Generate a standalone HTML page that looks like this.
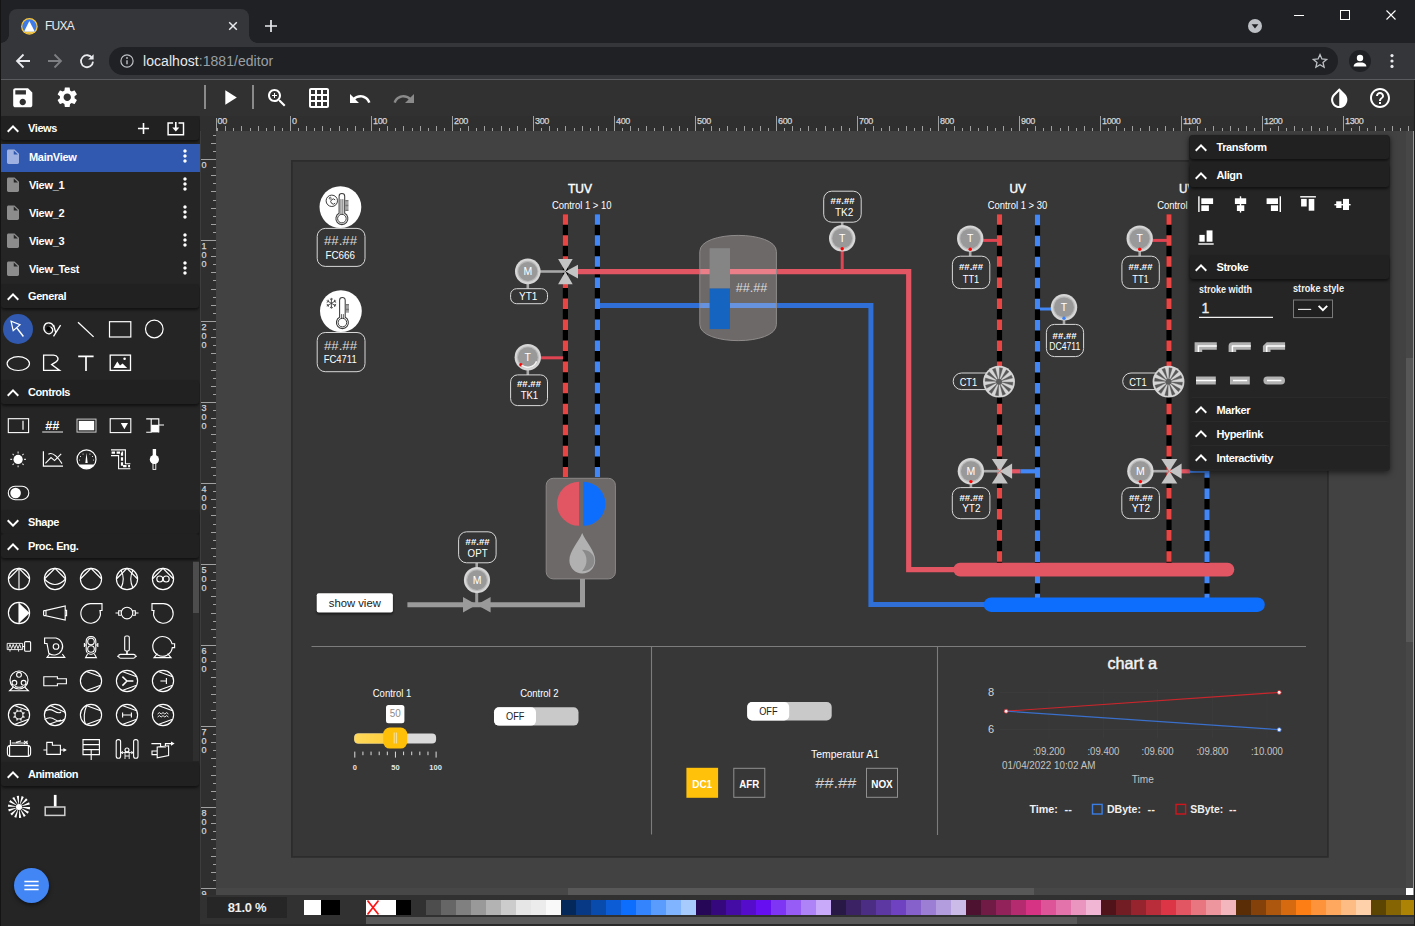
<!DOCTYPE html>
<html><head><meta charset="utf-8"><title>FUXA</title>
<style>
*{box-sizing:border-box;margin:0;padding:0}
html,body{width:1415px;height:926px;overflow:hidden;background:#424242;font-family:"Liberation Sans",sans-serif;color:#fff}
.abs{position:absolute}
svg{position:absolute;overflow:visible}
/* chrome */
#tabstrip{position:absolute;left:0;top:0;width:1415px;height:43px;background:#202124}
#tab{position:absolute;left:9px;top:9px;width:240px;height:34px;background:#35363a;border-radius:8px 8px 0 0}
#tab:before,#tab:after{content:"";position:absolute;bottom:0;width:8px;height:8px;background:radial-gradient(circle at 0 0,transparent 7.5px,#35363a 8px)}
#tab:before{left:-8px}
#tab:after{right:-8px;background:radial-gradient(circle at 100% 0,transparent 7.5px,#35363a 8px)}
#navbar{position:absolute;left:0;top:43px;width:1415px;height:36px;background:#35363a}
#omni{position:absolute;left:109px;top:4px;width:1228.5px;height:28px;border-radius:14px;background:#202124}
#navline{position:absolute;left:0;top:79px;width:1415px;height:1px;background:#5a5b5e}
/* app */
#apptb{position:absolute;left:0;top:80px;width:1415px;height:36px;background:#313131}
#side{position:absolute;left:0;top:116px;width:200px;height:810px;background:#252525}
.hdr{position:absolute;left:1px;width:198px;height:24px;background:#212121;border-radius:3px;box-shadow:0 2px 3px rgba(0,0,0,.55);font-size:11px;font-weight:bold;line-height:24px;padding-left:27px;color:#fff;letter-spacing:-.4px}
.row{position:absolute;left:1px;width:199px;height:28px;font-size:11px;font-weight:bold;line-height:26px;padding-left:28px;color:#fff;letter-spacing:-.3px}
</style></head><body>
<div id="tabstrip">
  <div id="tab"></div>
  <!-- favicon -->
  <svg style="left:20.7px;top:17.5px" width="16.8" height="16.8" viewBox="0 0 16.8 16.8"><defs><clipPath id="fv"><circle cx="8.4" cy="8.4" r="7.1"/></clipPath></defs><circle cx="8.4" cy="8.4" r="8.3" fill="#fdc836"/><g clip-path="url(#fv)"><rect x="0" y="0" width="16.8" height="16.8" fill="#3c7be8"/><path d="M8.4 3 L13.8 13.8 H3 Z" fill="#fff"/><rect x="0" y="13.8" width="16.8" height="4" fill="#fdc836"/></g></svg>
  <div class="abs" style="left:45px;top:19px;font-size:12px;color:#e8eaed;line-height:14px;letter-spacing:-.75px">FUXA</div>
  <svg style="left:228px;top:21px" width="10" height="10" viewBox="0 0 10 10"><path d="M1.2 1.2 L8.8 8.8 M8.8 1.2 L1.2 8.8" stroke="#e8eaed" stroke-width="1.5" fill="none"/></svg>
  <svg style="left:264px;top:19px" width="14" height="14" viewBox="0 0 14 14"><path d="M7 1 V13 M1 7 H13" stroke="#e8eaed" stroke-width="1.7" fill="none"/></svg>
  <!-- dropdown -->
  <svg style="left:1248px;top:19px" width="14" height="14" viewBox="0 0 14 14"><circle cx="7" cy="7" r="7" fill="#bdc1c6"/><path d="M3.6 5.2 H10.4 L7 9.6Z" fill="#202124"/></svg>
  <!-- window controls -->
  <svg style="left:1290px;top:8px" width="110" height="16" viewBox="0 0 110 16"><path d="M4 7.5 H14" stroke="#fff" stroke-width="1"/><rect x="50.5" y="2.5" width="9" height="9" fill="none" stroke="#fff" stroke-width="1"/><path d="M96.5 2.5 L105.5 11.5 M105.5 2.5 L96.5 11.5" stroke="#fff" stroke-width="1.1"/></svg>
</div>
<div id="navbar">
  <!-- back -->
  <svg style="left:15px;top:10px" width="16" height="16" viewBox="0 0 16 16"><path d="M15 8 H2.5 M8.5 1.5 L2 8 L8.5 14.5" stroke="#e8eaed" stroke-width="1.8" fill="none"/></svg>
  <svg style="left:47px;top:10px" width="16" height="16" viewBox="0 0 16 16"><path d="M1 8 H13.5 M7.5 1.5 L14 8 L7.5 14.5" stroke="#7d7f83" stroke-width="1.8" fill="none"/></svg>
  <!-- reload -->
  <svg style="left:79px;top:10px" width="16" height="16" viewBox="0 0 16 16"><path d="M13.2 5.2 A6 6 0 1 0 14 8.6" stroke="#e8eaed" stroke-width="1.8" fill="none"/><path d="M14.6 1.2 V6.6 H9.2 Z" fill="#e8eaed"/></svg>
  <div id="omni">
    <svg style="left:11px;top:7px" width="14" height="14" viewBox="0 0 14 14"><circle cx="7" cy="7" r="6.1" fill="none" stroke="#bdc1c6" stroke-width="1.2"/><path d="M7 6.2 V10.3" stroke="#bdc1c6" stroke-width="1.4"/><circle cx="7" cy="4" r=".9" fill="#bdc1c6"/></svg>
    <div class="abs" style="left:34px;top:5px;font-size:14px;line-height:18px;color:#e8eaed;white-space:nowrap;letter-spacing:.05px">localhost<span style="color:#9aa0a6">:1881/editor</span></div>
    <svg style="left:1203px;top:6px" width="16" height="16" viewBox="0 0 16 16"><path d="M8 1.6 L9.9 6 L14.6 6.4 L11 9.5 L12.1 14.2 L8 11.7 L3.9 14.2 L5 9.5 L1.4 6.4 L6.1 6 Z" fill="none" stroke="#bdc1c6" stroke-width="1.3" stroke-linejoin="miter"/></svg>
  </div>
  <svg style="left:1349px;top:7px" width="22" height="22" viewBox="0 0 22 22"><circle cx="11" cy="11" r="11" fill="#202124"/><circle cx="11" cy="8" r="3.2" fill="#fff"/><path d="M4.6 16.6 C4.6 12.8 8.4 12.4 11 12.4 C13.6 12.4 17.4 12.8 17.4 16.6 Z" fill="#fff"/></svg>
  <svg style="left:1390px;top:10px" width="4" height="16" viewBox="0 0 4 16"><circle cx="2" cy="2.6" r="1.6" fill="#e8eaed"/><circle cx="2" cy="8" r="1.6" fill="#e8eaed"/><circle cx="2" cy="13.4" r="1.6" fill="#e8eaed"/></svg>
</div>
<div id="navline"></div>
<div id="apptb"></div>
<svg style="left:9.75px;top:84.75px" width="25.5" height="25.5" viewBox="0 0 24 24"><path d="M17 3H5c-1.11 0-2 .9-2 2v14c0 1.1.89 2 2 2h14c1.1 0 2-.9 2-2V7l-4-4zm-5 16c-1.66 0-3-1.34-3-3s1.34-3 3-3 3 1.34 3 3-1.34 3-3 3zm3-10H5V5h10v4z" fill="#fff"/></svg>
<svg style="left:54.75px;top:85.25px" width="24.5" height="24.5" viewBox="0 0 24 24"><path d="M19.14 12.94c.04-.3.06-.61.06-.94 0-.32-.02-.64-.07-.94l2.03-1.58c.18-.14.23-.41.12-.61l-1.92-3.32c-.12-.22-.37-.29-.59-.22l-2.39.96c-.5-.38-1.03-.7-1.62-.94l-.36-2.54c-.04-.24-.24-.41-.48-.41h-3.84c-.24 0-.43.17-.47.41l-.36 2.54c-.59.24-1.13.57-1.62.94l-2.39-.96c-.22-.08-.47 0-.59.22L2.74 8.87c-.12.21-.08.47.12.61l2.03 1.58c-.05.3-.09.63-.09.94s.02.64.07.94l-2.03 1.58c-.18.14-.23.41-.12.61l1.92 3.32c.12.22.37.29.59.22l2.39-.96c.5.38 1.03.7 1.62.94l.36 2.54c.05.24.24.41.48.41h3.84c.24 0 .44-.17.47-.41l.36-2.54c.59-.24 1.13-.56 1.62-.94l2.39.96c.22.08.47 0 .59-.22l1.92-3.32c.12-.22.07-.47-.12-.61l-2.01-1.58zM12 15.6c-1.98 0-3.6-1.62-3.6-3.6s1.62-3.6 3.6-3.6 3.6 1.62 3.6 3.6-1.62 3.6-3.6 3.6z" fill="#fff"/></svg>
<div class="abs" style="left:204px;top:85px;width:2px;height:23.5px;background:#8a8a8a"></div>
<svg style="left:217.00px;top:85.00px" width="25" height="25" viewBox="0 0 24 24"><path d="M8 5v14l11-7z" fill="#fff"/></svg>
<div class="abs" style="left:252px;top:85px;width:2px;height:23.5px;background:#8a8a8a"></div>
<svg style="left:265.30px;top:86.00px" width="24" height="24" viewBox="0 0 24 24"><path d="M15.5 14h-.79l-.28-.27C15.41 12.59 16 11.11 16 9.5 16 5.91 13.09 3 9.5 3S3 5.91 3 9.5 5.91 16 9.5 16c1.61 0 3.09-.59 4.23-1.57l.27.28v.79l5 4.99L20.49 19l-4.99-5zm-6 0C7.01 14 5 11.99 5 9.5S7.01 5 9.5 5 14 7.01 14 9.5 11.99 14 9.5 14zM12 10h-2v2H9v-2H7V9h2V7h1v2h2v1z" fill="#fff"/></svg>
<svg style="left:307.00px;top:86.00px" width="24" height="24" viewBox="0 0 24 24"><path d="M20 2H4c-1.1 0-2 .9-2 2v16c0 1.1.9 2 2 2h16c1.1 0 2-.9 2-2V4c0-1.1-.9-2-2-2zM8 20H4v-4h4v4zm0-6H4v-4h4v4zm0-6H4V4h4v4zm6 12h-4v-4h4v4zm0-6h-4v-4h4v4zm0-6h-4V4h4v4zm6 12h-4v-4h4v4zm0-6h-4v-4h4v4zm0-6h-4V4h4v4z" fill="#fff"/></svg>
<svg style="left:348.00px;top:86.50px" width="24" height="24" viewBox="0 0 24 24"><path d="M12.5 8c-2.65 0-5.05.99-6.9 2.6L2 7v9h9l-3.62-3.62c1.39-1.16 3.16-1.88 5.12-1.88 3.54 0 6.55 2.31 7.6 5.5l2.37-.78C21.08 11.03 17.15 8 12.5 8z" fill="#fff"/></svg>
<svg style="left:392.00px;top:86.50px" width="24" height="24" viewBox="0 0 24 24"><path d="M18.4 10.6C16.55 8.99 14.15 8 11.5 8c-4.65 0-8.58 3.03-9.96 7.22L3.9 16c1.05-3.19 4.05-5.5 7.6-5.5 1.95 0 3.73.72 5.12 1.88L13 16h9V7l-3.6 3.6z" fill="#8a8a8a"/></svg>
<svg style="left:1327.05px;top:85.75px" width="24.5" height="24.5" viewBox="0 0 24 24"><path d="M17.66 7.93L12 2.27 6.34 7.93c-3.12 3.12-3.12 8.19 0 11.31C7.9 20.8 9.95 21.58 12 21.58c2.05 0 4.1-.78 5.66-2.34 3.12-3.12 3.12-8.19 0-11.31zM12 19.59c-1.6 0-3.11-.62-4.24-1.76C6.62 16.69 6 15.19 6 13.59s.62-3.11 1.76-4.24L12 5.1v14.49z" fill="#fff"/></svg>
<svg style="left:1368.00px;top:86.00px" width="24" height="24" viewBox="0 0 24 24"><path d="M11 18h2v-2h-2v2zm1-16C6.48 2 2 6.48 2 12s4.480 10 10 10 10-4.48 10-10S17.52 2 12 2zm0 18c-4.41 0-8-3.59-8-8s3.59-8 8-8 8 3.59 8 8-3.59 8-8 8zm0-14c-2.21 0-4 1.79-4 4h2c0-1.1.9-2 2-2s2 .9 2 2c0 2-3 1.750-3 5h2c0-2.25 3-2.5 3-5 0-2.21-1.79-4-4-4z" fill="#fff"/></svg>
<div id="side"></div>
<div class="hdr" style="top:116px">Views</div><svg style="left:1.00px;top:116.60px" width="24" height="24" viewBox="0 0 24 24"><path d="M12 8l-6 6 1.41 1.41L12 10.83l4.59 4.58L18 14z" fill="#fff"/></svg>
<svg style="left:133.50px;top:118.50px" width="19" height="19" viewBox="0 0 24 24"><path d="M19 13h-6v6h-2v-6H5v-2h6V5h2v6h6v2z" fill="#fff"/></svg>
<svg style="left:167.2px;top:121.8px" width="17.6" height="13.6" viewBox="0 0 19 15"><path d="M6.5 1 H1 V14 H18 V1 H12.5" fill="none" stroke="#fff" stroke-width="1.6"/><path d="M9.5 0 V8" stroke="#fff" stroke-width="1.8"/><path d="M5.6 6.2 H13.4 L9.5 10.6Z" fill="#fff"/></svg>
<div class="row" style="top:144px;background:#3059af;">MainView</div>
<svg style="left:4.00px;top:147.60px" width="18" height="17.4" preserveAspectRatio="none" viewBox="0 0 24 24"><path d="M6 2c-1.1 0-1.99.9-1.99 2L4 20c0 1.1.89 2 1.99 2H18c1.1 0 2-.9 2-2V8l-6-6H6zm7 7V3.500L18.5 9H13z" fill="#9fb1e0"/></svg>
<svg style="left:175.00px;top:146.00px" width="20" height="20" viewBox="0 0 24 24"><path d="M12 8c1.1 0 2-.9 2-2s-.9-2-2-2-2 .9-2 2 .9 2 2 2zm0 2c-1.1 0-2 .9-2 2s.9 2 2 2 2-.9 2-2-.9-2-2-2zm0 6c-1.100 0-2 .9-2 2s.9 2 2 2 2-.9 2-2-.9-2-2-2z" fill="#fff"/></svg>
<div class="row" style="top:172px;">View_1</div>
<svg style="left:4.00px;top:175.60px" width="18" height="17.4" preserveAspectRatio="none" viewBox="0 0 24 24"><path d="M6 2c-1.1 0-1.99.9-1.99 2L4 20c0 1.1.89 2 1.99 2H18c1.1 0 2-.9 2-2V8l-6-6H6zm7 7V3.500L18.5 9H13z" fill="#8c8c8c"/></svg>
<svg style="left:175.00px;top:174.00px" width="20" height="20" viewBox="0 0 24 24"><path d="M12 8c1.1 0 2-.9 2-2s-.9-2-2-2-2 .9-2 2 .9 2 2 2zm0 2c-1.1 0-2 .9-2 2s.9 2 2 2 2-.9 2-2-.9-2-2-2zm0 6c-1.100 0-2 .9-2 2s.9 2 2 2 2-.9 2-2-.9-2-2-2z" fill="#fff"/></svg>
<div class="row" style="top:200px;">View_2</div>
<svg style="left:4.00px;top:203.60px" width="18" height="17.4" preserveAspectRatio="none" viewBox="0 0 24 24"><path d="M6 2c-1.1 0-1.99.9-1.99 2L4 20c0 1.1.89 2 1.99 2H18c1.1 0 2-.9 2-2V8l-6-6H6zm7 7V3.500L18.5 9H13z" fill="#8c8c8c"/></svg>
<svg style="left:175.00px;top:202.00px" width="20" height="20" viewBox="0 0 24 24"><path d="M12 8c1.1 0 2-.9 2-2s-.9-2-2-2-2 .9-2 2 .9 2 2 2zm0 2c-1.1 0-2 .9-2 2s.9 2 2 2 2-.9 2-2-.9-2-2-2zm0 6c-1.100 0-2 .9-2 2s.9 2 2 2 2-.9 2-2-.9-2-2-2z" fill="#fff"/></svg>
<div class="row" style="top:228px;">View_3</div>
<svg style="left:4.00px;top:231.60px" width="18" height="17.4" preserveAspectRatio="none" viewBox="0 0 24 24"><path d="M6 2c-1.1 0-1.99.9-1.99 2L4 20c0 1.1.89 2 1.99 2H18c1.1 0 2-.9 2-2V8l-6-6H6zm7 7V3.500L18.5 9H13z" fill="#8c8c8c"/></svg>
<svg style="left:175.00px;top:230.00px" width="20" height="20" viewBox="0 0 24 24"><path d="M12 8c1.1 0 2-.9 2-2s-.9-2-2-2-2 .9-2 2 .9 2 2 2zm0 2c-1.1 0-2 .9-2 2s.9 2 2 2 2-.9 2-2-.9-2-2-2zm0 6c-1.100 0-2 .9-2 2s.9 2 2 2 2-.9 2-2-.9-2-2-2z" fill="#fff"/></svg>
<div class="row" style="top:256px;">View_Test</div>
<svg style="left:4.00px;top:259.60px" width="18" height="17.4" preserveAspectRatio="none" viewBox="0 0 24 24"><path d="M6 2c-1.1 0-1.99.9-1.99 2L4 20c0 1.1.89 2 1.99 2H18c1.1 0 2-.9 2-2V8l-6-6H6zm7 7V3.500L18.5 9H13z" fill="#8c8c8c"/></svg>
<svg style="left:175.00px;top:258.00px" width="20" height="20" viewBox="0 0 24 24"><path d="M12 8c1.1 0 2-.9 2-2s-.9-2-2-2-2 .9-2 2 .9 2 2 2zm0 2c-1.1 0-2 .9-2 2s.9 2 2 2 2-.9 2-2-.9-2-2-2zm0 6c-1.100 0-2 .9-2 2s.9 2 2 2 2-.9 2-2-.9-2-2-2z" fill="#fff"/></svg>
<div class="hdr" style="top:284px">General</div><svg style="left:1.00px;top:284.60px" width="24" height="24" viewBox="0 0 24 24"><path d="M12 8l-6 6 1.41 1.41L12 10.83l4.59 4.58L18 14z" fill="#fff"/></svg>
<div class="hdr" style="top:380px">Controls</div><svg style="left:1.00px;top:380.60px" width="24" height="24" viewBox="0 0 24 24"><path d="M12 8l-6 6 1.41 1.41L12 10.83l4.59 4.58L18 14z" fill="#fff"/></svg>
<div class="hdr" style="top:510px">Shape</div><svg style="left:1.00px;top:510.60px" width="24" height="24" viewBox="0 0 24 24"><path d="M16.59 8.59L12 13.17 7.41 8.59 6 10l6 6 6-6z" fill="#fff"/></svg>
<div class="hdr" style="top:534px">Proc. Eng.</div><svg style="left:1.00px;top:534.60px" width="24" height="24" viewBox="0 0 24 24"><path d="M12 8l-6 6 1.41 1.41L12 10.83l4.59 4.58L18 14z" fill="#fff"/></svg>
<div class="hdr" style="top:762px">Animation</div><svg style="left:1.00px;top:762.60px" width="24" height="24" viewBox="0 0 24 24"><path d="M12 8l-6 6 1.41 1.41L12 10.83l4.59 4.58L18 14z" fill="#fff"/></svg>
<div class="abs" style="left:13.5px;top:867.5px;width:35px;height:35px;border-radius:50%;background:#4285f4;box-shadow:0 2px 4px rgba(0,0,0,.5)"></div>
<svg style="left:21.50px;top:875.50px" width="19" height="19" viewBox="0 0 24 24"><path d="M3 18h18v-2H3v2zm0-5h18v-2H3v2zm0-7v2h18V6H3z" fill="#fff"/></svg>
<svg style="left:0;top:0" width="200" height="926" viewBox="0 0 200 926" fill="none" stroke="#fff" stroke-width="1.3" stroke-linecap="butt" stroke-linejoin="miter">
<circle cx="18" cy="329" r="15" fill="#3059af" stroke="none"/>
<path d="M11.1 321.3 L13.2 330.6 L20 324.600 Z" fill="none" stroke="#fff" stroke-width="1.2" stroke-linejoin="miter"/><path d="M16.8 327.9 L23.4 336.500" stroke="#fff" stroke-width="1.5"/>
<path d="M53.5 327 C53 322.400 46 321.300 44.200 326 C42.700 330.600 46.500 334.700 50 333.600 C53 332.700 53.600 329 51.500 327.600 C49.800 326.400 47.600 327.600 47.800 329.400" stroke-width="1.3"/><circle cx="48.6" cy="328.700" r="2.300" fill="#000" stroke="none"/><path d="M53.6 325 L55.700 332.600 M60.600 325.200 L53.500 336.400" stroke-width="1.300"/>
<path d="M78 322.3 L93.6 336.9" stroke-width="1.3"/>
<rect x="109.5" y="321.7" width="21.3" height="15.3" stroke-width="1.2"/>
<circle cx="154.3" cy="329" r="8.8" stroke-width="1.2"/>
<ellipse cx="18.3" cy="363.6" rx="11.2" ry="6.9" stroke-width="1.2"/>
<path d="M43.6 355.2 H53.5 C57.6 355.2 59.6 359 56.4 361.6 L51.6 364.6 L59.6 370.4 H43.6 Z" stroke-width="1.3"/>
<path d="M78.2 356.3 H93.6 M86 356.3 V371" stroke-width="1.7"/>
<rect x="110.2" y="355.1" width="20.3" height="15.3" stroke-width="1.3"/><path d="M113.4 368 L117.3 361.6 L120 365.6 L122.6 363.4 L127.2 368 Z" fill="#fff" stroke="none"/><circle cx="124.6" cy="358.8" r="1.3" fill="#fff" stroke="none"/>
<rect x="8.3" y="418.7" width="20.3" height="13.9" stroke-width="1.1"/><path d="M23 420.8 V429.8" stroke-width="1.2"/>
<text x="45.2" y="429.6" font-family="Liberation Sans" font-size="12.5" font-weight="bold" fill="#fff" stroke="none" textLength="14.2" lengthAdjust="spacingAndGlyphs">##</text><path d="M42.2 432 H63" stroke-width="1.1" stroke="#ddd"/>
<rect x="77" y="419.1" width="19" height="13" stroke-width="1" stroke="#ccc"/><rect x="78.8" y="420.9" width="15.4" height="9.4" fill="#fff" stroke="none"/>
<rect x="110.2" y="418.7" width="20.6" height="13.9" stroke-width="1.1"/><path d="M120.8 423 H128 L124.4 429.2 Z" fill="#fff" stroke="none"/>
<path d="M146.2 418.9 H158.8 V432.4 M151.2 418.9 V432.4 M146.2 432.3 H151.6 M158.8 425 H164" stroke-width="1.1"/><rect x="151.2" y="424.8" width="7.6" height="7.6" fill="#fff" stroke="none"/>
<circle cx="18.1" cy="459.4" r="4.6" fill="#fff" stroke="none"/>
<path d="M24.10 459.40 L25.90 459.40 M22.34 463.64 L23.62 464.92 M18.10 465.40 L18.10 467.20 M13.86 463.64 L12.58 464.92 M12.10 459.40 L10.30 459.40 M13.86 455.16 L12.58 453.88 M18.10 453.40 L18.10 451.60 M22.34 455.16 L23.62 453.88 " stroke-width="1.1" stroke="#ddd"/>
<path d="M43.4 451.2 V466.2 H63" stroke-width="1.2"/><path d="M45.4 463.4 L51 457.6 L54.6 460.6 L61.2 453.8 M48.4 454.2 C52 452 57 456 62 463.6" stroke-width="1.1"/>
<circle cx="86.5" cy="459.4" r="9.5" stroke-width="1.2"/><path d="M78.6 464.6 H94.4 A9.5 9.5 0 0 1 78.6 464.600Z" fill="#fff" stroke="none"/><path d="M85.3 463 L86.5 452.8 L87.7 463Z" fill="#fff" stroke="none"/>
<circle cx="79.60" cy="460.00" r=".55" fill="#fff" stroke="none"/><circle cx="80.52" cy="456.55" r=".55" fill="#fff" stroke="none"/><circle cx="83.05" cy="454.02" r=".55" fill="#fff" stroke="none"/><circle cx="89.95" cy="454.02" r=".55" fill="#fff" stroke="none"/><circle cx="92.48" cy="456.55" r=".55" fill="#fff" stroke="none"/><circle cx="93.40" cy="460.00" r=".55" fill="#fff" stroke="none"/>
<path d="M111 449.9 H125.4 V463.8 H130.4 M111 455.6 H118.6 V468.8 H130.4" stroke-width="1.1"/><path d="M111.6 452.7 H122 V466.2 H130" stroke="#fff" stroke-width="2.2" stroke-dasharray="3.4 1.6"/>
<rect x="152.7" y="449" width="3.4" height="8" fill="#fff" stroke="none"/><circle cx="154.4" cy="459.5" r="4.6" fill="#fff" stroke="none"/><rect x="153" y="463" width="2.8" height="6.4" stroke-width=".9"/>
<rect x="8.3" y="486.2" width="20.5" height="13.5" rx="6.75" stroke-width="1.1"/><circle cx="15.6" cy="493" r="5.3" fill="#fff" stroke="none"/>
<circle cx="19" cy="579" r="10.6" stroke-width="1.15"/><path d="M8.4 579.0 L19.0 568.4 L29.6 579.0" stroke-width="1.15"/><path d="M19 568.4 V589.6" stroke-width="1.12"/>
<circle cx="55" cy="579" r="10.6" stroke-width="1.15"/><path d="M44.4 579.0 L55.0 568.4 L65.6 579.0" stroke-width="1.15"/><path d="M44.4 579 Q55 590 65.6 579" stroke-width="1.15"/>
<circle cx="91" cy="579" r="10.6" stroke-width="1.15"/><path d="M80.4 579.0 L91.0 568.4 L101.6 579.0" stroke-width="1.15"/>
<circle cx="127" cy="579" r="10.6" stroke-width="1.15"/><path d="M116.4 579.0 L127.0 568.4 L137.6 579.0" stroke-width="1.15"/><path d="M121 570 Q125.5 579 121 588 M133 570 Q128.5 579 133 588" stroke-width="1.12"/>
<circle cx="163" cy="579" r="10.6" stroke-width="1.15"/><path d="M152.4 579.0 L163.0 568.4 L173.6 579.0" stroke-width="1.15"/><circle cx="159.8" cy="579" r="3" stroke-width="1.12"/><circle cx="166.2" cy="579" r="3" stroke-width="1.12"/>
<circle cx="19" cy="613" r="10.6" stroke-width="1.15"/><path d="M19 602.2 V623.8" stroke-width="1.12"/><path d="M19 603 L29.6 613 L19 623Z" fill="#fff" stroke="none"/>
<path d="M46 610.4 L65.2 606 V620 L46 615.8 Z M43.6 610.6 H46 M43.6 615.6 H46 M43.6 610.6 V615.6 M65.2 610.4 H66.6 V615.6 H65.2" stroke-width="1.12"/>
<path d="M102 603.6 H91 A 9.8 9.8 0 1 0 100 610.5 H102 Z" stroke-width="1.15"/>
<circle cx="127" cy="613" r="5.8" stroke-width="1.15"/><path d="M121.2 610.7 H118.7 V615.3 H121.2 M132.8 610.7 H135.3 V615.3 H132.8 M118.7 613 H115.5 M135.3 613 H138.5" stroke-width="1.12"/>
<path d="M152 603.6 H163 A 9.8 9.8 0 1 1 154 610.5 H152 Z" stroke-width="1.15"/>
<path d="M7.2 643.4 H22.6 V649.6 H7.2 Z M8.4 648.6 L10 644.4 L11.6 648.6 L13.2 644.4 L14.8 648.6 L16.4 644.4 L18 648.6 L19.6 644.4 L21.2 648.6 M10 649.6 V651.6 M18.6 649.6 V651.6" stroke-width=".9"/><rect x="24.6" y="641.6" width="6" height="9.6" rx="1" stroke-width="1.12"/><path d="M22.6 646.5 H24.6" stroke-width="1.12"/>
<path d="M44.6 638 H56 A 8.6 8.6 0 1 1 48.8 653.2 L47 643.5 H44.600 Z" stroke-width="1.15"/><circle cx="56" cy="646.5" r="2.8" stroke-width="1.12"/><path d="M49.5 654 L47 657.4 H64.8 L62.3 654" stroke-width="1.12"/>
<rect x="86.2" y="636.6" width="9.6" height="17.6" rx="4.4" stroke-width="1.12"/><circle cx="91" cy="641.6" r="3.3" stroke-width="1.12"/><circle cx="91" cy="649" r="3.3" stroke-width="1.12"/><path d="M86.2 645 H84 M95.8 645 H98.3 M84.4 643 V647 M97.8 643 V647 M87.6 654 L85.6 657.6 H96.4 L94.4 654" stroke-width="1.12"/>
<rect x="124.7" y="636" width="4.6" height="15" rx="1.5" stroke-width="1.12"/><path d="M127 651 V654.4" stroke-width="1.6"/><rect x="118.6" y="654.4" width="16.8" height="3.8" rx="1.9" stroke-width="1.12"/><path d="M118.6 656.3 H117 M135.4 656.3 H137" stroke-width="1.12"/>
<path d="M172 643.7 A 9.8 9.8 0 1 0 172.3 647.6 H174.6 V643.7 Z" stroke-width="1.15"/><path d="M157.4 653.6 L154 657.6 H171 L167.6 653.6" stroke-width="1.12"/>
<circle cx="19" cy="680" r="9" stroke-width="1.12"/><circle cx="19" cy="674.8" r="2.4" stroke-width="1.12"/><circle cx="14.4" cy="682.8" r="2.4" stroke-width="1.12"/><circle cx="23.6" cy="682.8" r="2.4" stroke-width="1.12"/><path d="M13.4 687 L9.6 690.8 H28.4 L24.6 687 M15 686.4 Q19 688 23 686.4" stroke-width="1.12"/>
<path d="M43.8 676.8 H57.4 V678.8 H66.4 V683.8 H57.4 V685.8 H43.8 Z" stroke-width="1.12"/>
<circle cx="91" cy="681" r="10.6" stroke-width="1.15"/><path d="M86.20 671.55 L100.65 676.70 M86.20 690.45 L100.65 685.30" stroke-width="1.12"/>
<circle cx="127" cy="681" r="10.6" stroke-width="1.15"/><path d="M122.20 671.55 L136.65 676.70 M122.20 690.45 L136.65 685.30" stroke-width="1.12"/><path d="M127 681 L122.4 676.6 M127 681 L122.4 685.6 M127 681 H133.4" stroke-width="1.5"/>
<circle cx="163" cy="681" r="10.6" stroke-width="1.15"/><path d="M158.20 671.55 L172.65 676.70 M158.20 690.45 L172.65 685.30" stroke-width="1.12"/><path d="M160.4 681 H166.4 M166.4 678 V684" stroke-width="1.12"/>
<circle cx="19" cy="715" r="10.6" stroke-width="1.15"/><path d="M14.20 705.55 L28.65 710.70 M14.20 724.45 L28.65 719.30" stroke-width="1.12"/><circle cx="19" cy="715" r="4" stroke-width="1.1"/><path d="M22.88 716.61 L24.54 717.30 M20.61 718.88 L21.30 720.54 M17.39 718.88 L16.70 720.54 M15.12 716.61 L13.46 717.30 M15.12 713.39 L13.46 712.70 M17.39 711.12 L16.70 709.46 M20.61 711.12 L21.30 709.46 M22.88 713.39 L24.54 712.70 " stroke-width="1.3"/>
<circle cx="55" cy="715" r="10.6" stroke-width="1.15"/><path d="M50 705.4 L65.6 712.4 M44.6 711.4 Q49 708 54 711 T61 712 M44.6 719.6 Q50 716 55 719.6 T65 718.6 M49 724.2 L61 720" stroke-width="1.12"/>
<circle cx="91" cy="715" r="10.6" stroke-width="1.15"/><path d="M86.20 705.55 L100.65 710.70 M86.20 724.45 L100.65 719.30" stroke-width="1.12"/><path d="M87 704.8 Q82.4 715 85.4 724.4" stroke-width="1.12"/>
<circle cx="127" cy="715" r="10.6" stroke-width="1.15"/><path d="M122.20 705.55 L136.65 710.70 M122.20 724.45 L136.65 719.30" stroke-width="1.12"/><path d="M122.6 715 H131.4 M122.6 712.4 V717.6 M131.4 712.4 V717.6" stroke-width="1.12"/>
<circle cx="163" cy="715" r="10.6" stroke-width="1.15"/><path d="M158.20 705.55 L172.65 710.70 M158.20 724.45 L172.65 719.30" stroke-width="1.12"/><path d="M157.6 714 l1.8 -1.4 l1.8 1.4 l1.8 -1.4 l1.8 1.4 l1.8 -1.4 l1.8 1.400 M157.6 717 l1.8 -1.4 l1.8 1.4 l1.8 -1.4 l1.8 1.4 l1.8 -1.4 l1.8 1.400" stroke-width=".9"/>
<rect x="7.4" y="745.4" width="23.2" height="11" rx="3.4" stroke-width="1.1"/><path d="M10.4 745.4 V740 M11.6 743 H28 M16 742.2 L21 741 M24 740.8 L27.6 744 M27.6 740.8 L24 744 M9.6 745.4 V756.4 M28.4 745.4 V756.4" stroke-width="1.12"/>
<path d="M46.8 742.4 H52.4 V745.2 H60.4 V754.4 H46.8 Z M43.4 750 H46.8 M60.4 750 H64" stroke-width="1.12"/><path d="M63.4 748 L66.800 750 L63.400 752Z" fill="#fff" stroke="none"/>
<path d="M83 739.6 H99.4 V754.6 H83 Z M83 744.6 H99.4 M83 749.6 H99.4 M91.2 749.6 V760" stroke-width="1.12"/>
<rect x="116.2" y="739.6" width="4.4" height="18.6" rx="2" stroke-width="1.12"/><rect x="133.6" y="739.6" width="4.4" height="18.600" rx="2" stroke-width="1.12"/><circle cx="127" cy="750" r="2" stroke-width="1.12"/><path d="M120.6 752.6 H133.6 M125 759 V752 H129.2 V759 M123 751.4 L121 752.6 L123 753.8 M131.2 751.4 L133.200 752.6 L131.200 753.8 M125 756 H129.2" stroke-width=".9"/>
<path d="M151.4 743.6 H160.6 V747 H165.4 V743.6 H172 M157.2 747 L168.6 745.8 V755.6 L157.2 757.8 Z M157.2 751 H152 V754.6 H157.2" stroke-width="1.1"/><path d="M171 741.4 L174.600 743.6 L171 745.8Z" fill="#fff" stroke="none"/>
<path d="M20.49 807.08 L30.10 807.07 L29.82 809.38 Z M20.26 807.71 L28.93 811.87 L27.67 813.83 Z M19.79 808.18 L25.79 815.68 L23.81 816.90 Z M19.16 808.39 L21.31 817.76 L18.99 818.00 Z M18.49 808.31 L16.37 817.68 L14.18 816.90 Z M17.93 807.95 L11.95 815.47 L10.32 813.82 Z M17.58 807.38 L8.93 811.57 L8.18 809.36 Z M17.51 806.72 L7.90 806.73 L8.18 804.42 Z M17.74 806.09 L9.07 801.93 L10.33 799.97 Z M18.21 805.62 L12.21 798.12 L14.19 796.90 Z M18.84 805.41 L16.69 796.04 L19.01 795.80 Z M19.51 805.49 L21.63 796.12 L23.82 796.90 Z M20.07 805.85 L26.05 798.33 L27.68 799.98 Z M20.42 806.42 L29.07 802.23 L29.82 804.44 Z " fill="#fff" stroke="none"/><circle cx="19" cy="806.9" r="3" fill="#fff" stroke="none"/>
<rect x="45.2" y="807" width="19.6" height="8.4" stroke-width="1.5" stroke="#cfcfcf"/><path d="M55.2 794.9 V806.4" stroke-width="2.7"/>
</svg>
<div class="abs" style="left:193px;top:561px;width:6px;height:200px;background:#2e2e2e"></div><div class="abs" style="left:193px;top:562px;width:6px;height:51px;background:#4d4d4d"></div>
<div class="abs" style="left:1406px;top:131px;width:7px;height:757px;background:#474747"></div>
<div class="abs" style="left:1406px;top:358px;width:7px;height:284px;background:#575757"></div>
<div class="abs" style="left:1413px;top:131px;width:1px;height:764px;background:#9a9a9a"></div>
<div class="abs" style="left:1414px;top:80px;width:1px;height:846px;background:#1c1c1c"></div>
<div class="abs" style="left:216px;top:888px;width:1190px;height:7px;background:#474747"></div>
<div class="abs" style="left:568px;top:888px;width:466px;height:7px;background:#585858"></div>
<div class="abs" style="left:1406px;top:888px;width:7px;height:7px;background:#fff"></div>

<svg style="left:200px;top:116px" width="1214" height="15" viewBox="200 116 1214 15"><rect x="200" y="116" width="1214" height="15" fill="#2f2f2f"/><path d="M217.5 128 V131 M225.5 126 V131 M233.5 128 V131 M241.5 126 V131 M250.5 128 V131 M258.5 126 V131 M266.5 128 V131 M274.5 126 V131 M282.5 128 V131 M290.5 116 V131 M298.5 128 V131 M306.5 126 V131 M314.5 128 V131 M322.5 126 V131 M330.5 128 V131 M339.5 126 V131 M347.5 128 V131 M355.5 126 V131 M363.5 128 V131 M371.5 116 V131 M379.5 128 V131 M387.5 126 V131 M395.5 128 V131 M403.5 126 V131 M412.5 128 V131 M420.5 126 V131 M428.5 128 V131 M436.5 126 V131 M444.5 128 V131 M452.5 116 V131 M460.5 128 V131 M468.5 126 V131 M476.5 128 V131 M484.5 126 V131 M492.5 128 V131 M501.5 126 V131 M509.5 128 V131 M517.5 126 V131 M525.5 128 V131 M533.5 116 V131 M541.5 128 V131 M549.5 126 V131 M557.5 128 V131 M565.5 126 V131 M574.5 128 V131 M582.5 126 V131 M590.5 128 V131 M598.5 126 V131 M606.5 128 V131 M614.5 116 V131 M622.5 128 V131 M630.5 126 V131 M638.5 128 V131 M646.5 126 V131 M654.5 128 V131 M663.5 126 V131 M671.5 128 V131 M679.5 126 V131 M687.5 128 V131 M695.5 116 V131 M703.5 128 V131 M711.5 126 V131 M719.5 128 V131 M727.5 126 V131 M736.5 128 V131 M744.5 126 V131 M752.5 128 V131 M760.5 126 V131 M768.5 128 V131 M776.5 116 V131 M784.5 128 V131 M792.5 126 V131 M800.5 128 V131 M808.5 126 V131 M816.5 128 V131 M825.5 126 V131 M833.5 128 V131 M841.5 126 V131 M849.5 128 V131 M857.5 116 V131 M865.5 128 V131 M873.5 126 V131 M881.5 128 V131 M889.5 126 V131 M898.5 128 V131 M906.5 126 V131 M914.5 128 V131 M922.5 126 V131 M930.5 128 V131 M938.5 116 V131 M946.5 128 V131 M954.5 126 V131 M962.5 128 V131 M970.5 126 V131 M978.5 128 V131 M987.5 126 V131 M995.5 128 V131 M1003.5 126 V131 M1011.5 128 V131 M1019.5 116 V131 M1027.5 128 V131 M1035.5 126 V131 M1043.5 128 V131 M1051.5 126 V131 M1060.5 128 V131 M1068.5 126 V131 M1076.5 128 V131 M1084.5 126 V131 M1092.5 128 V131 M1100.5 116 V131 M1108.5 128 V131 M1116.5 126 V131 M1124.5 128 V131 M1132.5 126 V131 M1140.5 128 V131 M1149.5 126 V131 M1157.5 128 V131 M1165.5 126 V131 M1173.5 128 V131 M1181.5 116 V131 M1189.5 128 V131 M1197.5 126 V131 M1205.5 128 V131 M1213.5 126 V131 M1222.5 128 V131 M1230.5 126 V131 M1238.5 128 V131 M1246.5 126 V131 M1254.5 128 V131 M1262.5 116 V131 M1270.5 128 V131 M1278.5 126 V131 M1286.5 128 V131 M1294.5 126 V131 M1302.5 128 V131 M1311.5 126 V131 M1319.5 128 V131 M1327.5 126 V131 M1335.5 128 V131 M1343.5 116 V131 M1351.5 128 V131 M1359.5 126 V131 M1367.5 128 V131 M1375.5 126 V131 M1384.5 128 V131 M1392.5 126 V131 M1400.5 128 V131 M1408.5 126 V131 " stroke="#a0a0a0" stroke-width="1" fill="none"/><g font-family="Liberation Sans" font-size="9" fill="#d4d4d4" stroke="#d4d4d4" stroke-width=".25" letter-spacing="-.45"><text x="292.1" y="124.4">0</text><text x="373.1" y="124.4">100</text><text x="454.1" y="124.4">200</text><text x="535.1" y="124.4">300</text><text x="616.1" y="124.4">400</text><text x="697.1" y="124.4">500</text><text x="778.1" y="124.4">600</text><text x="859.1" y="124.4">700</text><text x="940.1" y="124.4">800</text><text x="1021.1" y="124.4">900</text><text x="1102.1" y="124.4">1000</text><text x="1183.1" y="124.4">1100</text><text x="1264.1" y="124.4">1200</text><text x="1345.1" y="124.4">1300</text><text x="217.6" y="124.4">00</text></g><rect x="200" y="116" width="16" height="15" fill="#2f2f2f"/><path d="M216.5 118 V131" stroke="#a0a0a0" stroke-width="1"/></svg>
<svg style="left:200px;top:131px" width="16" height="764" viewBox="200 131 16 764"><rect x="200" y="131" width="16" height="764" fill="#2f2f2f"/><path d="M213 135.5 H216 M211 143.5 H216 M213 151.5 H216 M200 159.5 H216 M213 167.5 H216 M211 175.5 H216 M213 183.5 H216 M211 191.5 H216 M213 200.5 H216 M211 208.5 H216 M213 216.5 H216 M211 224.5 H216 M213 232.5 H216 M200 240.5 H216 M213 248.5 H216 M211 256.5 H216 M213 264.5 H216 M211 272.5 H216 M213 280.5 H216 M211 289.5 H216 M213 297.5 H216 M211 305.5 H216 M213 313.5 H216 M200 321.5 H216 M213 329.5 H216 M211 337.5 H216 M213 345.5 H216 M211 353.5 H216 M213 362.5 H216 M211 370.5 H216 M213 378.5 H216 M211 386.5 H216 M213 394.5 H216 M200 402.5 H216 M213 410.5 H216 M211 418.5 H216 M213 426.5 H216 M211 434.5 H216 M213 442.5 H216 M211 451.5 H216 M213 459.5 H216 M211 467.5 H216 M213 475.5 H216 M200 483.5 H216 M213 491.5 H216 M211 499.5 H216 M213 507.5 H216 M211 515.5 H216 M213 524.5 H216 M211 532.5 H216 M213 540.5 H216 M211 548.5 H216 M213 556.5 H216 M200 564.5 H216 M213 572.5 H216 M211 580.5 H216 M213 588.5 H216 M211 596.5 H216 M213 604.5 H216 M211 613.5 H216 M213 621.5 H216 M211 629.5 H216 M213 637.5 H216 M200 645.5 H216 M213 653.5 H216 M211 661.5 H216 M213 669.5 H216 M211 677.5 H216 M213 686.5 H216 M211 694.5 H216 M213 702.5 H216 M211 710.5 H216 M213 718.5 H216 M200 726.5 H216 M213 734.5 H216 M211 742.5 H216 M213 750.5 H216 M211 758.5 H216 M213 766.5 H216 M211 775.5 H216 M213 783.5 H216 M211 791.5 H216 M213 799.5 H216 M200 807.5 H216 M213 815.5 H216 M211 823.5 H216 M213 831.5 H216 M211 839.5 H216 M213 848.5 H216 M211 856.5 H216 M213 864.5 H216 M211 872.5 H216 M213 880.5 H216 M200 888.5 H216 " stroke="#a0a0a0" stroke-width="1" fill="none"/><g font-family="Liberation Sans" font-size="9" fill="#d4d4d4" stroke="#d4d4d4" stroke-width=".25"><text x="201.6" y="168.3">0</text><text x="201.6" y="249.3">1</text><text x="201.6" y="258.1">0</text><text x="201.6" y="266.9">0</text><text x="201.6" y="330.3">2</text><text x="201.6" y="339.1">0</text><text x="201.6" y="347.9">0</text><text x="201.6" y="411.3">3</text><text x="201.6" y="420.1">0</text><text x="201.6" y="428.9">0</text><text x="201.6" y="492.3">4</text><text x="201.6" y="501.1">0</text><text x="201.6" y="509.9">0</text><text x="201.6" y="573.3">5</text><text x="201.6" y="582.1">0</text><text x="201.6" y="590.9">0</text><text x="201.6" y="654.3">6</text><text x="201.6" y="663.1">0</text><text x="201.6" y="671.9">0</text><text x="201.6" y="735.3">7</text><text x="201.6" y="744.1">0</text><text x="201.6" y="752.9">0</text><text x="201.6" y="816.3">8</text><text x="201.6" y="825.1">0</text><text x="201.6" y="833.9">0</text><text x="201.6" y="897.3">9</text><text x="201.6" y="906.1">0</text><text x="201.6" y="914.9">0</text></g></svg>
<div class="abs" id="sepl" style="left:200px;top:131px;width:1px;height:764px;background:#3d3d3d"></div>
<svg style="left:0;top:0" width="1415" height="926" viewBox="0 0 1415 926" font-family="Liberation Sans, sans-serif">
<rect x="291.85" y="160.85" width="1036" height="696" fill="#373737" stroke="#2c2c2c" stroke-width="1.7"/>
<path d="M565.4 214.2 V477" stroke="#000" stroke-width="5.2"/><path d="M565.4 214.2 V477" stroke="#e84545" stroke-width="5.2" stroke-dasharray="10.53 10.53" stroke-dashoffset="0"/>
<path d="M597.4 214.2 V477" stroke="#000" stroke-width="5.2"/><path d="M597.4 214.2 V477" stroke="#4287f5" stroke-width="5.2" stroke-dasharray="10.53 10.53" stroke-dashoffset="0"/>
<path d="M999.5 214.2 V564" stroke="#000" stroke-width="5.2"/><path d="M999.5 214.2 V564" stroke="#e84545" stroke-width="5.2" stroke-dasharray="10.53 10.53" stroke-dashoffset="0"/>
<path d="M1037.5 214.6 V598" stroke="#000" stroke-width="5.2"/><path d="M1037.5 214.6 V598" stroke="#4287f5" stroke-width="5.2" stroke-dasharray="10.53 10.53" stroke-dashoffset="0"/>
<path d="M1169.0 214.2 V564" stroke="#000" stroke-width="5.2"/><path d="M1169.0 214.2 V564" stroke="#e84545" stroke-width="5.2" stroke-dasharray="10.53 10.53" stroke-dashoffset="0"/>
<path d="M1207.0 214.6 V598" stroke="#000" stroke-width="5.2"/><path d="M1207.0 214.6 V598" stroke="#4287f5" stroke-width="5.2" stroke-dasharray="10.53 10.53" stroke-dashoffset="0"/>
<path d="M578 271.6 H908.7 V569.6 H960" fill="none" stroke="#e25563" stroke-width="5.2"/>
<path d="M600 305.6 H870.9 V604.4 H990" fill="none" stroke="#2f6fd6" stroke-width="5"/>
<rect x="953.3" y="562.8" width="281" height="13.6" rx="6.8" fill="#e25563"/>
<rect x="983.8" y="597.4" width="281" height="14.6" rx="7.3" fill="#0d6efd"/>
<circle cx="340.4" cy="207.1" r="20.9" fill="#fff"/><path d="M339.09999999999997 213.29999999999998 V196.2 a2.8 2.8 0 0 1 5.6 0 V213.29999999999998 A6 6 0 1 1 339.09999999999997 213.29999999999998 Z" fill="none" stroke="#3c3c3c" stroke-width="1.05"/><circle cx="341.9" cy="218.6" r="4.3" fill="none" stroke="#3c3c3c" stroke-width="1"/><path d="M340.95 214.4 V199.1 M342.84999999999997 214.4 V199.1" stroke="#3c3c3c" stroke-width=".8"/><path d="M345.29999999999995 200.5 h3.2 M345.29999999999995 201.75 h3.2 M345.29999999999995 203.0 h3.2 M345.29999999999995 204.25 h3.2 M345.29999999999995 205.5 h3.2 M345.29999999999995 206.75 h3.2 M345.29999999999995 208.0 h3.2 M345.29999999999995 209.25 h3.2 M345.29999999999995 210.5 h3.2 " stroke="#3c3c3c" stroke-width=".7"/><circle cx="331.79999999999995" cy="200.79999999999998" r="5.7" fill="none" stroke="#3c3c3c" stroke-width="1"/><circle cx="330.2" cy="198.2" r="1" fill="none" stroke="#3c3c3c" stroke-width=".8"/><path d="M335.2 199.9 A2.5 2.5 0 1 0 335.2 203.2" fill="none" stroke="#3c3c3c" stroke-width="1"/>
<rect x="317.2" y="228.4" width="47.8" height="38.0" rx="8" fill="#353535" stroke="#d8d8d8" stroke-width="1"/>
<text x="340.5" y="244.6" font-size="12.5" text-anchor="middle" fill="#ddd" font-weight="normal" textLength="33" lengthAdjust="spacingAndGlyphs">##.##</text>
<text x="340.2" y="259.4" font-size="10.5" text-anchor="middle" fill="#fff" font-weight="normal" textLength="29.5" lengthAdjust="spacingAndGlyphs">FC666</text>
<circle cx="340.9" cy="311.1" r="20.9" fill="#fff"/><path d="M339.59999999999997 317.3 V300.20000000000005 a2.8 2.8 0 0 1 5.6 0 V317.3 A6 6 0 1 1 339.59999999999997 317.3 Z" fill="none" stroke="#3c3c3c" stroke-width="1.05"/><circle cx="342.4" cy="322.6" r="4.3" fill="none" stroke="#3c3c3c" stroke-width="1"/><path d="M341.45 318.40000000000003 V314.1 M343.34999999999997 318.40000000000003 V314.1" stroke="#3c3c3c" stroke-width=".8"/><path d="M345.79999999999995 304.5 h3.2 M345.79999999999995 305.75 h3.2 M345.79999999999995 307.0 h3.2 M345.79999999999995 308.25 h3.2 M345.79999999999995 309.5 h3.2 M345.79999999999995 310.75 h3.2 M345.79999999999995 312.0 h3.2 " stroke="#3c3c3c" stroke-width=".7"/><path d="M331.40 308.70 L331.40 297.90 M326.72 306.00 L336.08 300.60 M326.72 300.60 L336.08 306.00 M331.40 306.70 L329.91 307.88 M331.40 306.70 L332.89 307.88 M328.46 305.00 L326.69 304.30 M328.46 305.00 L328.18 306.88 M328.46 301.60 L328.18 299.72 M328.46 301.60 L326.69 302.30 M331.40 299.90 L332.89 298.72 M331.40 299.90 L329.91 298.72 M334.34 301.60 L336.11 302.30 M334.34 301.60 L334.62 299.72 M334.34 305.00 L334.62 306.88 M334.34 305.00 L336.11 304.30 " stroke="#3c3c3c" stroke-width=".85" fill="none"/>
<rect x="317.2" y="332.5" width="47.8" height="39.2" rx="8" fill="#353535" stroke="#d8d8d8" stroke-width="1"/>
<text x="340.5" y="349.6" font-size="12.5" text-anchor="middle" fill="#ddd" font-weight="normal" textLength="33" lengthAdjust="spacingAndGlyphs">##.##</text>
<text x="340.2" y="363.4" font-size="10.5" text-anchor="middle" fill="#fff" font-weight="normal" textLength="33" lengthAdjust="spacingAndGlyphs">FC4711</text>
<text x="580" y="193" font-size="12.5" text-anchor="middle" fill="#fff" font-weight="normal" textLength="24" lengthAdjust="spacingAndGlyphs" stroke="#fff" stroke-width=".45">TUV</text>
<text x="581.7" y="209" font-size="10.5" text-anchor="middle" fill="#fff" font-weight="normal" textLength="59.5" lengthAdjust="spacingAndGlyphs">Control 1 &gt; 10</text>
<text x="1017.6" y="193" font-size="12.5" text-anchor="middle" fill="#fff" font-weight="normal" textLength="16.4" lengthAdjust="spacingAndGlyphs" stroke="#fff" stroke-width=".45">UV</text>
<text x="1017.4" y="209" font-size="10.5" text-anchor="middle" fill="#fff" font-weight="normal" textLength="59.5" lengthAdjust="spacingAndGlyphs">Control 1 &gt; 30</text>
<text x="1187.1" y="193" font-size="12.5" text-anchor="middle" fill="#fff" font-weight="normal" textLength="16.4" lengthAdjust="spacingAndGlyphs" stroke="#fff" stroke-width=".45">UV</text>
<text x="1186.9" y="209" font-size="10.5" text-anchor="middle" fill="#fff" font-weight="normal" textLength="59.5" lengthAdjust="spacingAndGlyphs">Control 1 &gt; 30</text>
<path d="M539 271.5 H565" stroke="#a8a8a8" stroke-width="2.6"/><path d="M527.8 283 V289" stroke="#a8a8a8" stroke-width="2.6"/>
<circle cx="527.8" cy="271.4" r="12.8" fill="#d6d6d6"/><circle cx="527.8" cy="271.4" r="10.600000000000001" fill="#b9b9b9"/><circle cx="527.8" cy="271.4" r="9.5" fill="#999"/><text x="527.8" y="275.09999999999997" font-size="10.5" text-anchor="middle" fill="#fff" font-weight="normal">M</text>
<path d="M558.1 259.0 H572.6999999999999 L565.4 271.6 Z M558.1 284.20000000000005 H572.6999999999999 L565.4 271.6 Z M578.0 264.7 V278.50000000000006 L565.4 271.6 Z" fill="#c4c4c4"/>
<rect x="510.6" y="288.7" width="36.9" height="15.0" rx="6" fill="#353535" stroke="#d8d8d8" stroke-width="1"/>
<text x="528.2" y="300.4" font-size="10.5" text-anchor="middle" fill="#fff" font-weight="normal" textLength="18.5" lengthAdjust="spacingAndGlyphs">YT1</text>
<path d="M539 357.8 H563" stroke="#e04453" stroke-width="3"/><path d="M527.8 369 V375.500" stroke="#a8a8a8" stroke-width="2.6"/>
<circle cx="527.8" cy="357.2" r="13.2" fill="#d6d6d6"/><circle cx="527.8" cy="357.2" r="11.0" fill="#b9b9b9"/><circle cx="527.8" cy="357.2" r="9.899999999999999" fill="#999"/><text x="527.8" y="360.9" font-size="10.5" text-anchor="middle" fill="#fff" font-weight="normal">T</text><circle cx="520.9" cy="364.8" r="1.7" fill="#f00"/>
<path d="M521.6 365.2 A9.6 9.6 0 0 0 536.6 361.2" fill="none" stroke="#f2f2f2" stroke-width="1.6"/>
<rect x="510.6" y="374.9" width="36.9" height="30.7" rx="7" fill="#353535" stroke="#d8d8d8" stroke-width="1"/>
<text x="529" y="386.92" font-size="9.5" text-anchor="middle" fill="#fff" font-weight="bold" textLength="24" lengthAdjust="spacingAndGlyphs">##.##</text>
<text x="529.4" y="399" font-size="10.5" text-anchor="middle" fill="#fff" font-weight="normal" textLength="17.5" lengthAdjust="spacingAndGlyphs">TK1</text>
<rect x="546.2" y="478.3" width="69.2" height="100.6" rx="7" fill="#6d6969" stroke="#8b8787" stroke-width="1"/>
<path d="M579 481.8 A22 22 0 0 0 579 525.8 Z" fill="#e25563"/><path d="M583.4 481.8 A22 22 0 0 1 583.4 525.8 Z" fill="#0d6efd"/>
<path d="M582.2 533 C585.5 541.5 595.2 550.5 595.2 560.6 A12.9 12.9 0 0 1 569.4 560.6 C569.4 550.5 579 541.5 582.2 533Z" fill="#b1b1b1"/><path d="M582 549.8 C589.5 549.8 594.4 554.6 594.4 560.4 C594.4 566.8 589.2 571.2 582 571.2 C588 565 588 556 582 549.8Z" fill="#8a8a8a"/>
<path d="M582.5 579 V604.8 H407.4" fill="none" stroke="#9a9a9a" stroke-width="5"/>
<path d="M463 597 V612.6 L476.700 604.8 Z M490.600 597 V612.6 L476.700 604.8Z" fill="#9a9a9a"/>
<path d="M476.7 592 V605" stroke="#9a9a9a" stroke-width="3"/><path d="M476.7 562.800 V568.500" stroke="#a8a8a8" stroke-width="2.6"/>
<circle cx="477" cy="580.1" r="13.1" fill="#d6d6d6"/><circle cx="477" cy="580.1" r="10.899999999999999" fill="#b9b9b9"/><circle cx="477" cy="580.1" r="9.8" fill="#999"/><text x="477" y="583.8000000000001" font-size="10.5" text-anchor="middle" fill="#fff" font-weight="normal">M</text>
<rect x="458.6" y="531.8" width="37.5" height="31.0" rx="8" fill="#353535" stroke="#d8d8d8" stroke-width="1"/>
<text x="477.6" y="544.52" font-size="9.5" text-anchor="middle" fill="#fff" font-weight="bold" textLength="24" lengthAdjust="spacingAndGlyphs">##.##</text>
<text x="477.6" y="557" font-size="10.5" text-anchor="middle" fill="#fff" font-weight="normal" textLength="20" lengthAdjust="spacingAndGlyphs">OPT</text>
<defs><filter id="bl" x="-20%" y="-40%" width="140%" height="200%"><feGaussianBlur stdDeviation="1.3"/></filter></defs>
<rect x="316.7" y="594.4" width="76.200" height="19.8" rx="2" fill="#000" opacity=".55" filter="url(#bl)"/>
<rect x="316.7" y="593.2" width="76.200" height="19.400" rx="2" fill="#fff"/>
<text x="354.8" y="607.2" font-size="11.5" text-anchor="middle" fill="#1a1a1a" font-weight="normal" textLength="52" lengthAdjust="spacingAndGlyphs">show view</text>
<path d="M699.8 251.500 C699.8 230 776.4 230 776.4 251.500 V324.500 C776.4 346 699.800 346 699.800 324.500 Z" fill="rgba(255,242,242,0.27)" stroke="#8f8b8b" stroke-width="1"/>
<rect x="709.6" y="248.2" width="20.4" height="40.3" fill="#858585"/><rect x="709.6" y="288.5" width="20.400" height="40.6" fill="#1565c0"/>
<text x="751.6" y="292.4" font-size="12.5" text-anchor="middle" fill="#ddd" font-weight="normal" textLength="31.6" lengthAdjust="spacingAndGlyphs">##.##</text>
<path d="M842.2 249 V270" stroke="#e04453" stroke-width="3"/><path d="M842.2 221.500 V227" stroke="#a8a8a8" stroke-width="2.6"/>
<circle cx="842.2" cy="238.3" r="13.2" fill="#d6d6d6"/><circle cx="842.2" cy="238.3" r="11.0" fill="#b9b9b9"/><circle cx="842.2" cy="238.3" r="9.899999999999999" fill="#999"/><text x="842.2" y="242.0" font-size="10.5" text-anchor="middle" fill="#fff" font-weight="normal">T</text><circle cx="842.2" cy="248.7" r="1.7" fill="#f00"/>
<rect x="823.7" y="191.2" width="37.5" height="31.0" rx="8" fill="#353535" stroke="#d8d8d8" stroke-width="1"/>
<text x="842.6" y="203.92" font-size="9.5" text-anchor="middle" fill="#fff" font-weight="bold" textLength="24" lengthAdjust="spacingAndGlyphs">##.##</text>
<text x="844.2" y="216.4" font-size="10.5" text-anchor="middle" fill="#fff" font-weight="normal" textLength="18.5" lengthAdjust="spacingAndGlyphs">TK2</text>
<path d="M982 240.4 H997.5" stroke="#e04453" stroke-width="3"/><path d="M970.2 250 V256" stroke="#a8a8a8" stroke-width="2.6"/>
<circle cx="970.2" cy="238.6" r="13.2" fill="#d6d6d6"/><circle cx="970.2" cy="238.6" r="11.0" fill="#b9b9b9"/><circle cx="970.2" cy="238.6" r="9.899999999999999" fill="#999"/><text x="970.2" y="242.29999999999998" font-size="10.5" text-anchor="middle" fill="#fff" font-weight="normal">T</text><circle cx="970.2" cy="249.3" r="1.7" fill="#f00"/>
<rect x="952.4" y="256.2" width="37.4" height="32.4" rx="8" fill="#353535" stroke="#d8d8d8" stroke-width="1"/>
<text x="971" y="269.92" font-size="9.5" text-anchor="middle" fill="#fff" font-weight="bold" textLength="24" lengthAdjust="spacingAndGlyphs">##.##</text>
<text x="971" y="282.6" font-size="10.5" text-anchor="middle" fill="#fff" font-weight="normal" textLength="16.5" lengthAdjust="spacingAndGlyphs">TT1</text>
<rect x="953.2" y="373" width="42.8" height="16.6" rx="8.3" fill="#353535" stroke="#d8d8d8" stroke-width="1"/>
<text x="968.4" y="386.2" font-size="10.5" text-anchor="middle" fill="#fff" font-weight="normal" textLength="17.5" lengthAdjust="spacingAndGlyphs">CT1</text>
<circle cx="999" cy="381.7" r="15.9" fill="#d6d6d6"/>
<path d="M1001.37 382.06 L1012.99 382.19 L1012.51 385.37 Z M1000.88 383.20 L1010.87 389.12 L1008.87 391.63 Z M999.88 383.93 L1005.57 394.06 L1002.58 395.23 Z M998.64 384.07 L998.51 395.69 L995.33 395.21 Z M997.50 383.58 L991.58 393.57 L989.07 391.57 Z M996.77 382.58 L986.64 388.27 L985.47 385.28 Z M996.63 381.34 L985.01 381.21 L985.49 378.03 Z M997.12 380.20 L987.13 374.28 L989.13 371.77 Z M998.12 379.47 L992.43 369.34 L995.42 368.17 Z M999.36 379.33 L999.49 367.71 L1002.67 368.19 Z M1000.50 379.82 L1006.42 369.83 L1008.93 371.83 Z M1001.23 380.82 L1011.36 375.13 L1012.53 378.12 Z " fill="#585858" stroke="#585858" stroke-width=".4"/><circle cx="999" cy="381.7" r="3" fill="#5c5c5c"/>
<path d="M983 471.2 H999" stroke="#a8a8a8" stroke-width="2.6"/><path d="M970.9 483 V488" stroke="#a8a8a8" stroke-width="2.6"/>
<circle cx="970.9" cy="471.2" r="13.2" fill="#d6d6d6"/><circle cx="970.9" cy="471.2" r="11.0" fill="#b9b9b9"/><circle cx="970.9" cy="471.2" r="9.899999999999999" fill="#999"/><text x="970.9" y="474.9" font-size="10.5" text-anchor="middle" fill="#fff" font-weight="normal">M</text><circle cx="970.9" cy="481.6" r="1.7" fill="#f00"/>
<path d="M1011 471.3 H1020.5" stroke="#e25563" stroke-width="4.2"/>
<path d="M1020.5 471.3 H1035" stroke="#4287f5" stroke-width="4.2"/>
<path d="M991.8 458.9 H1007.8 L999.8 471.2 Z M991.8 483.5 H1007.8 L999.8 471.2 Z M1012.0999999999999 463.59999999999997 V478.8 L999.8 471.2 Z" fill="#c4c4c4"/>
<rect x="952.3" y="487.6" width="37.6" height="31.1" rx="8" fill="#353535" stroke="#d8d8d8" stroke-width="1"/>
<text x="971.4" y="500.72" font-size="9.5" text-anchor="middle" fill="#fff" font-weight="bold" textLength="24" lengthAdjust="spacingAndGlyphs">##.##</text>
<text x="971.4" y="512" font-size="10.5" text-anchor="middle" fill="#fff" font-weight="normal" textLength="18.5" lengthAdjust="spacingAndGlyphs">YT2</text>
<path d="M1151.5 240.4 H1167.0" stroke="#e04453" stroke-width="3"/><path d="M1139.7 250 V256" stroke="#a8a8a8" stroke-width="2.6"/>
<circle cx="1139.7" cy="238.6" r="13.2" fill="#d6d6d6"/><circle cx="1139.7" cy="238.6" r="11.0" fill="#b9b9b9"/><circle cx="1139.7" cy="238.6" r="9.899999999999999" fill="#999"/><text x="1139.7" y="242.29999999999998" font-size="10.5" text-anchor="middle" fill="#fff" font-weight="normal">T</text><circle cx="1139.7" cy="249.3" r="1.7" fill="#f00"/>
<rect x="1121.9" y="256.2" width="37.4" height="32.4" rx="8" fill="#353535" stroke="#d8d8d8" stroke-width="1"/>
<text x="1140.5" y="269.92" font-size="9.5" text-anchor="middle" fill="#fff" font-weight="bold" textLength="24" lengthAdjust="spacingAndGlyphs">##.##</text>
<text x="1140.5" y="282.6" font-size="10.5" text-anchor="middle" fill="#fff" font-weight="normal" textLength="16.5" lengthAdjust="spacingAndGlyphs">TT1</text>
<rect x="1122.7" y="373" width="42.8" height="16.6" rx="8.3" fill="#353535" stroke="#d8d8d8" stroke-width="1"/>
<text x="1137.9" y="386.2" font-size="10.5" text-anchor="middle" fill="#fff" font-weight="normal" textLength="17.5" lengthAdjust="spacingAndGlyphs">CT1</text>
<circle cx="1168.5" cy="381.7" r="15.9" fill="#d6d6d6"/>
<path d="M1170.87 382.06 L1182.49 382.19 L1182.01 385.37 Z M1170.38 383.20 L1180.37 389.12 L1178.37 391.63 Z M1169.38 383.93 L1175.07 394.06 L1172.08 395.23 Z M1168.14 384.07 L1168.01 395.69 L1164.83 395.21 Z M1167.00 383.58 L1161.08 393.57 L1158.57 391.57 Z M1166.27 382.58 L1156.14 388.27 L1154.97 385.28 Z M1166.13 381.34 L1154.51 381.21 L1154.99 378.03 Z M1166.62 380.20 L1156.63 374.28 L1158.63 371.77 Z M1167.62 379.47 L1161.93 369.34 L1164.92 368.17 Z M1168.86 379.33 L1168.99 367.71 L1172.17 368.19 Z M1170.00 379.82 L1175.92 369.83 L1178.43 371.83 Z M1170.73 380.82 L1180.86 375.13 L1182.03 378.12 Z " fill="#585858" stroke="#585858" stroke-width=".4"/><circle cx="1168.5" cy="381.7" r="3" fill="#5c5c5c"/>
<path d="M1152.5 471.2 H1168.5" stroke="#a8a8a8" stroke-width="2.6"/><path d="M1140.4 483 V488" stroke="#a8a8a8" stroke-width="2.6"/>
<circle cx="1140.4" cy="471.2" r="13.2" fill="#d6d6d6"/><circle cx="1140.4" cy="471.2" r="11.0" fill="#b9b9b9"/><circle cx="1140.4" cy="471.2" r="9.899999999999999" fill="#999"/><text x="1140.4" y="474.9" font-size="10.5" text-anchor="middle" fill="#fff" font-weight="normal">M</text><circle cx="1140.4" cy="481.6" r="1.7" fill="#f00"/>
<path d="M1180.5 471.3 H1190.0" stroke="#e25563" stroke-width="4.2"/>
<path d="M1190.0 471.6 H1207.0" stroke="#4287f5" stroke-width="2.4"/>
<path d="M1161.3 458.9 H1177.3 L1169.3 471.2 Z M1161.3 483.5 H1177.3 L1169.3 471.2 Z M1181.6 463.59999999999997 V478.8 L1169.3 471.2 Z" fill="#c4c4c4"/>
<rect x="1121.8" y="487.6" width="37.6" height="31.1" rx="8" fill="#353535" stroke="#d8d8d8" stroke-width="1"/>
<text x="1140.9" y="500.72" font-size="9.5" text-anchor="middle" fill="#fff" font-weight="bold" textLength="24" lengthAdjust="spacingAndGlyphs">##.##</text>
<text x="1140.9" y="512" font-size="10.5" text-anchor="middle" fill="#fff" font-weight="normal" textLength="18.5" lengthAdjust="spacingAndGlyphs">YT2</text>
<path d="M1040 309 H1052" stroke="#4287f5" stroke-width="3"/><path d="M1064 319 V324.500" stroke="#a8a8a8" stroke-width="2.6"/>
<circle cx="1064" cy="307.3" r="13.2" fill="#d6d6d6"/><circle cx="1064" cy="307.3" r="11.0" fill="#b9b9b9"/><circle cx="1064" cy="307.3" r="9.899999999999999" fill="#999"/><text x="1064" y="311.0" font-size="10.5" text-anchor="middle" fill="#fff" font-weight="normal">T</text><circle cx="1064" cy="318.3" r="1.7" fill="#3b82f6"/>
<rect x="1046.4" y="324.4" width="37.2" height="32.2" rx="8" fill="#353535" stroke="#d8d8d8" stroke-width="1"/>
<text x="1064.6" y="338.92" font-size="9.5" text-anchor="middle" fill="#fff" font-weight="bold" textLength="24" lengthAdjust="spacingAndGlyphs">##.##</text>
<text x="1064.8" y="350.4" font-size="10" text-anchor="middle" fill="#fff" font-weight="normal" textLength="31" lengthAdjust="spacingAndGlyphs">DC4711</text>
<path d="M311.5 646.5 H1306 M651.5 646.5 V834.5 M937.5 646.5 V835" stroke="#7c7c7c" stroke-width="1.1" fill="none"/>
<text x="392" y="696.6" font-size="10.5" text-anchor="middle" fill="#fff" font-weight="normal" textLength="38.5" lengthAdjust="spacingAndGlyphs">Control 1</text>
<rect x="386" y="705" width="18.4" height="18.2" rx="2.5" fill="#fff"/>
<text x="395.3" y="716.8" font-size="10.5" text-anchor="middle" fill="#8c8c8c" font-weight="normal" textLength="11" lengthAdjust="spacingAndGlyphs">50</text>
<rect x="354.3" y="733.5" width="81.8" height="10" rx="4" fill="#dadada"/>
<defs><linearGradient id="yg" x1="0" x2="1"><stop offset="0" stop-color="#ffd95c"/><stop offset="1" stop-color="#ffcc33"/></linearGradient></defs>
<rect x="354.3" y="733.5" width="42" height="10" rx="4" fill="url(#yg)"/>
<rect x="383.2" y="727.6" width="24" height="21" rx="6.5" fill="#fdbf08"/>
<path d="M394.2 732.5 V743.5 M396.4 732.5 V743.500" stroke="#f3e3a8" stroke-width="1"/>
<path d="M354.80 751.6 V757.6 M362.93 751.6 V755.2 M371.06 751.6 V755.2 M379.19 751.6 V755.2 M387.32 751.6 V755.2 M395.45 751.6 V757.6 M403.58 751.6 V755.2 M411.71 751.6 V755.2 M419.84 751.6 V755.2 M427.97 751.6 V755.2 M436.10 751.6 V757.6 " stroke="#ddd" stroke-width="1"/>
<text x="354.8" y="769.6" font-size="7.5" text-anchor="middle" fill="#e6e6e6" font-weight="bold">0</text>
<text x="395.4" y="769.6" font-size="7.5" text-anchor="middle" fill="#e6e6e6" font-weight="bold">50</text>
<text x="435.6" y="769.6" font-size="7.5" text-anchor="middle" fill="#e6e6e6" font-weight="bold">100</text>
<text x="539.4" y="696.6" font-size="10.5" text-anchor="middle" fill="#fff" font-weight="normal" textLength="38.5" lengthAdjust="spacingAndGlyphs">Control 2</text>
<rect x="494" y="707.2" width="84.5" height="18.4" rx="5" fill="#c9c9c9"/>
<rect x="494" y="707.2" width="42" height="18.400" rx="5" fill="#fff"/>
<text x="515.2" y="720.2" font-size="10.5" text-anchor="middle" fill="#222" font-weight="normal" textLength="18.5" lengthAdjust="spacingAndGlyphs">OFF</text>
<rect x="747.2" y="702.1" width="84.5" height="18.4" rx="5" fill="#c9c9c9"/>
<rect x="747.2" y="702.1" width="42" height="18.400" rx="5" fill="#fff"/>
<text x="768.4000000000001" y="715.1" font-size="10.5" text-anchor="middle" fill="#222" font-weight="normal" textLength="18.5" lengthAdjust="spacingAndGlyphs">OFF</text>
<text x="845" y="757.8" font-size="11" text-anchor="middle" fill="#fff" font-weight="normal" textLength="68" lengthAdjust="spacingAndGlyphs">Temperatur A1</text>
<rect x="686.4" y="767.8" width="31.7" height="30" fill="#ffc10a"/>
<text x="702.2" y="787.6" font-size="10.5" text-anchor="middle" fill="#fff" font-weight="bold" textLength="20" lengthAdjust="spacingAndGlyphs">DC1</text>
<rect x="733.8" y="768.300" width="31" height="29" fill="none" stroke="#909090" stroke-width="1"/>
<text x="749.3" y="787.6" font-size="10.5" text-anchor="middle" fill="#fff" font-weight="bold" textLength="20" lengthAdjust="spacingAndGlyphs">AFR</text>
<text x="835.8" y="787.6" font-size="14.5" text-anchor="middle" fill="#d0d0d0" font-weight="normal" textLength="41" lengthAdjust="spacingAndGlyphs">##.##</text>
<rect x="866.5" y="768.300" width="31" height="29" fill="none" stroke="#909090" stroke-width="1"/>
<text x="882" y="787.6" font-size="10.5" text-anchor="middle" fill="#fff" font-weight="bold" textLength="21.5" lengthAdjust="spacingAndGlyphs">NOX</text>
<text x="1132.2" y="668.6" font-size="16.5" text-anchor="middle" fill="#f4f4f4" font-weight="normal" textLength="49.5" lengthAdjust="spacingAndGlyphs" stroke="#f4f4f4" stroke-width=".45">chart a</text>
<text x="991" y="695.6" font-size="11" text-anchor="middle" fill="#d4d4d4" font-weight="normal">8</text>
<text x="991" y="732.6" font-size="11" text-anchor="middle" fill="#d4d4d4" font-weight="normal">6</text>
<path d="M1048.9 689 V738 M1103.4 689 V738 M1157.5 689 V738 M1212.4 689 V738 M1266.9 689 V738 M1000 692.5 H1282 M1000 729.5 H1282" stroke="#3b3b3b" stroke-width="1" fill="none"/>
<path d="M1006.1 711.2 L1279.2 692.4" stroke="#c9262c" stroke-width="1.2"/>
<path d="M1006.1 711.2 L1279.2 729.700" stroke="#3a6fcb" stroke-width="1.2"/>
<circle cx="1279.2" cy="729.7" r="2" fill="#e8efff" stroke="#3a6fcb" stroke-width=".8"/><circle cx="1279.2" cy="692.4" r="2" fill="#fff0f0" stroke="#c9262c" stroke-width=".8"/><circle cx="1006.1" cy="711.2" r="2" fill="#fff0f0" stroke="#c9262c" stroke-width=".8"/>
<text x="1048.9" y="754.8" font-size="10.5" text-anchor="middle" fill="#c4c4c4" font-weight="normal" textLength="32" lengthAdjust="spacingAndGlyphs">:09.200</text>
<text x="1103.4" y="754.8" font-size="10.5" text-anchor="middle" fill="#c4c4c4" font-weight="normal" textLength="32" lengthAdjust="spacingAndGlyphs">:09.400</text>
<text x="1157.5" y="754.8" font-size="10.5" text-anchor="middle" fill="#c4c4c4" font-weight="normal" textLength="32" lengthAdjust="spacingAndGlyphs">:09.600</text>
<text x="1212.4" y="754.8" font-size="10.5" text-anchor="middle" fill="#c4c4c4" font-weight="normal" textLength="32" lengthAdjust="spacingAndGlyphs">:09.800</text>
<text x="1266.9" y="754.8" font-size="10.5" text-anchor="middle" fill="#c4c4c4" font-weight="normal" textLength="32" lengthAdjust="spacingAndGlyphs">:10.000</text>
<text x="1002" y="769.4" font-size="10.5" text-anchor="start" fill="#c4c4c4" font-weight="normal" textLength="93.5" lengthAdjust="spacingAndGlyphs">01/04/2022 10:02 AM</text>
<text x="1142.8" y="783.2" font-size="10.5" text-anchor="middle" fill="#c4c4c4" font-weight="normal" textLength="22" lengthAdjust="spacingAndGlyphs">Time</text>
<text x="1029.4" y="813.2" font-size="11" text-anchor="start" fill="#f0f0f0" font-weight="bold" textLength="28.5" lengthAdjust="spacingAndGlyphs">Time:</text>
<text x="1064.5" y="813.2" font-size="11" text-anchor="start" fill="#f0f0f0" font-weight="bold">--</text>
<rect x="1092.5" y="804.4" width="9.6" height="9.600" fill="none" stroke="#3b7de0" stroke-width="1.4"/>
<text x="1107" y="813.2" font-size="11" text-anchor="start" fill="#f0f0f0" font-weight="bold" textLength="34" lengthAdjust="spacingAndGlyphs">DByte:</text>
<text x="1147.5" y="813.2" font-size="11" text-anchor="start" fill="#f0f0f0" font-weight="bold">--</text>
<rect x="1176" y="804.4" width="9.600" height="9.600" fill="none" stroke="#d4141c" stroke-width="1.4"/>
<text x="1190.2" y="813.2" font-size="11" text-anchor="start" fill="#f0f0f0" font-weight="bold" textLength="33" lengthAdjust="spacingAndGlyphs">SByte:</text>
<text x="1229" y="813.2" font-size="11" text-anchor="start" fill="#f0f0f0" font-weight="bold">--</text>
</svg>
<div class="abs" style="left:1188.5px;top:134.5px;width:201.5px;height:336px;background:#252525;border-radius:4px;box-shadow:0 2px 6px rgba(0,0,0,.55)"></div>
<div class="hdr" style="left:1189.5px;top:135px;width:199px;">Transform</div><svg style="left:1189px;top:135.6px" width="24" height="24" viewBox="0 0 24 24"><path d="M12 8l-6 6 1.41 1.41L12 10.83l4.59 4.58L18 14z" fill="#fff"/></svg>
<div class="hdr" style="left:1189.5px;top:163px;width:199px;">Align</div><svg style="left:1189px;top:163.6px" width="24" height="24" viewBox="0 0 24 24"><path d="M12 8l-6 6 1.41 1.41L12 10.83l4.59 4.58L18 14z" fill="#fff"/></svg>
<div class="hdr" style="left:1189.5px;top:255px;width:199px;">Stroke</div><svg style="left:1189px;top:255.6px" width="24" height="24" viewBox="0 0 24 24"><path d="M12 8l-6 6 1.41 1.41L12 10.83l4.59 4.58L18 14z" fill="#fff"/></svg>
<div class="hdr" style="left:1189.5px;top:397px;width:199px;box-shadow:none;background:#232323;border-top:1px solid #2a2a2a;">Marker</div><svg style="left:1189px;top:397.6px" width="24" height="24" viewBox="0 0 24 24"><path d="M12 8l-6 6 1.41 1.41L12 10.83l4.59 4.58L18 14z" fill="#fff"/></svg>
<div class="hdr" style="left:1189.5px;top:421px;width:199px;box-shadow:none;background:#232323;border-top:1px solid #2a2a2a;">Hyperlink</div><svg style="left:1189px;top:421.6px" width="24" height="24" viewBox="0 0 24 24"><path d="M12 8l-6 6 1.41 1.41L12 10.83l4.59 4.58L18 14z" fill="#fff"/></svg>
<div class="hdr" style="left:1189.5px;top:445px;width:199px;box-shadow:none;background:#232323;border-top:1px solid #2a2a2a;">Interactivity</div><svg style="left:1189px;top:445.6px" width="24" height="24" viewBox="0 0 24 24"><path d="M12 8l-6 6 1.41 1.41L12 10.83l4.59 4.58L18 14z" fill="#fff"/></svg>
<svg style="left:0;top:0" width="1415" height="926" viewBox="0 0 1415 926" font-family="Liberation Sans, sans-serif">
<g fill="#fff" stroke="none">
<rect x="1198.2" y="196.3" width="1.4" height="15.7"/><rect x="1201.3" y="198.3" width="11.8" height="5.7"/><rect x="1201.3" y="205.300" width="7.600" height="5.700"/>
<rect x="1239.8" y="196.3" width="1.4" height="16.300"/><rect x="1234.9" y="198.3" width="11.3" height="5.700"/><rect x="1236.900" y="205.300" width="7.400" height="5.700"/>
<rect x="1279.6" y="196.300" width="1.400" height="15.700"/><rect x="1266.600" y="198.300" width="11.400" height="5.700"/><rect x="1270.900" y="205.300" width="7.100" height="5.700"/>
<rect x="1300.2" y="196.1" width="15.700" height="1.400"/><rect x="1301.100" y="198.900" width="5.600" height="7.600"/><rect x="1308.700" y="198.900" width="5.600" height="11.800"/>
<rect x="1334.4" y="204" width="16.200" height="1.400"/><rect x="1336.200" y="201.300" width="5.300" height="6.700"/><rect x="1343" y="198.900" width="6" height="11.100"/>
<rect x="1198.3" y="243.3" width="15.400" height="1.400"/><rect x="1199.400" y="234.900" width="5.300" height="6.800"/><rect x="1206.600" y="230.400" width="5.900" height="11.300"/>
</g>
<text x="1199" y="293.4" font-size="10.5" font-weight="bold" fill="#f2f2f2" textLength="53" lengthAdjust="spacingAndGlyphs">stroke width</text>
<text x="1293" y="292.4" font-size="10.5" font-weight="bold" fill="#f2f2f2" textLength="51" lengthAdjust="spacingAndGlyphs">stroke style</text>
<text x="1201.4" y="313.2" font-size="14" fill="#ececec" stroke="#ececec" stroke-width=".35">1</text>
<path d="M1199 317.4 H1273" stroke="#f0f0f0" stroke-width="1.1"/>
<rect x="1293.5" y="300" width="39" height="17.600" fill="#202020" stroke="#7a7a7a" stroke-width="1"/>
<path d="M1298 309.400 H1311.200" stroke="#eee" stroke-width="1.1"/><path d="M1318.600 305.800 L1322.900 310.200 L1327.200 305.800" fill="none" stroke="#fff" stroke-width="1.9"/>
<path d="M1198.4 352 V346 H1216.8000000000002" fill="none" stroke="#b2b2b2" stroke-width="7.6" stroke-linejoin="miter"/><path d="M1198.4 352 V346 H1216.8000000000002" fill="none" stroke="#fff" stroke-width="1.5" stroke-linejoin="miter"/>
<path d="M1232.4 352 V346 H1250.8000000000002" fill="none" stroke="#b2b2b2" stroke-width="7.6" stroke-linejoin="round"/><path d="M1232.4 352 V346 H1250.8000000000002" fill="none" stroke="#fff" stroke-width="1.5" stroke-linejoin="round"/>
<path d="M1266.7 352 V346 H1285.1000000000001" fill="none" stroke="#b2b2b2" stroke-width="7.6" stroke-linejoin="bevel"/><path d="M1266.7 352 V346 H1285.1000000000001" fill="none" stroke="#fff" stroke-width="1.5" stroke-linejoin="bevel"/>
<path d="M1196 380.500 H1215.800" stroke="#b2b2b2" stroke-width="8"/><path d="M1196 380.500 H1215.800" stroke="#fff" stroke-width="1.500"/>
<path d="M1230 380.500 H1249.800" stroke="#b2b2b2" stroke-width="8"/><path d="M1233 380.500 H1247.200" stroke="#fff" stroke-width="1.500"/>
<path d="M1267.400 380.500 H1281" stroke="#b2b2b2" stroke-width="8" stroke-linecap="round"/><path d="M1267 380.500 H1281.400" stroke="#fff" stroke-width="1.500"/>
</svg>
<div class="abs" style="left:200px;top:895px;width:1214px;height:31px;background:#313131"></div>
<div class="abs" style="left:207px;top:897px;width:80px;height:21px;background:#262626;font-size:13px;font-weight:bold;line-height:22.5px;text-align:center;color:#eee;letter-spacing:-.3px">81.0 %</div>
<div class="abs" style="left:304px;top:900px;width:17px;height:15px;background:#fff"></div><div class="abs" style="left:321px;top:900px;width:18.5px;height:15px;background:#000"></div>
<div class="abs" style="left:366px;top:900px;width:30px;height:15px;background:#fff"></div><div class="abs" style="left:396px;top:900px;width:15px;height:15px;background:#000"></div>
<svg style="left:366px;top:900px" width="15" height="15" viewBox="0 0 15 15"><path d="M1.5 .5 L12.5 14.5 M12.5 .5 L1.5 14.5" stroke="#ff1414" stroke-width="1.7"/></svg>
<div class="abs" style="left:200px;top:924px;width:1214px;height:2px;background:#292929"></div>
<div class="abs" style="left:426px;top:900px;width:988px;height:15px;overflow:hidden;white-space:nowrap;font-size:0"><i style="position:absolute;left:0px;top:0;width:15px;height:15px;background:#4d4d4d"></i><i style="position:absolute;left:15px;top:0;width:15px;height:15px;background:#666666"></i><i style="position:absolute;left:30px;top:0;width:15px;height:15px;background:#808080"></i><i style="position:absolute;left:45px;top:0;width:15px;height:15px;background:#999999"></i><i style="position:absolute;left:60px;top:0;width:15px;height:15px;background:#b3b3b3"></i><i style="position:absolute;left:75px;top:0;width:15px;height:15px;background:#cccccc"></i><i style="position:absolute;left:90px;top:0;width:15px;height:15px;background:#e6e6e6"></i><i style="position:absolute;left:105px;top:0;width:15px;height:15px;background:#ececec"></i><i style="position:absolute;left:120px;top:0;width:15px;height:15px;background:#f9f9f9"></i><i style="position:absolute;left:135px;top:0;width:15px;height:15px;background:#05285b"></i><i style="position:absolute;left:150px;top:0;width:15px;height:15px;background:#073984"></i><i style="position:absolute;left:165px;top:0;width:15px;height:15px;background:#094bac"></i><i style="position:absolute;left:180px;top:0;width:15px;height:15px;background:#0b5cd5"></i><i style="position:absolute;left:195px;top:0;width:15px;height:15px;background:#0d6efd"></i><i style="position:absolute;left:210px;top:0;width:15px;height:15px;background:#3485fd"></i><i style="position:absolute;left:225px;top:0;width:15px;height:15px;background:#5a9cfe"></i><i style="position:absolute;left:240px;top:0;width:15px;height:15px;background:#81b4fe"></i><i style="position:absolute;left:255px;top:0;width:15px;height:15px;background:#a8cbfe"></i><i style="position:absolute;left:270px;top:0;width:15px;height:15px;background:#250657"></i><i style="position:absolute;left:285px;top:0;width:15px;height:15px;background:#35087e"></i><i style="position:absolute;left:300px;top:0;width:15px;height:15px;background:#450ba5"></i><i style="position:absolute;left:315px;top:0;width:15px;height:15px;background:#560dcb"></i><i style="position:absolute;left:330px;top:0;width:15px;height:15px;background:#6610f2"></i><i style="position:absolute;left:345px;top:0;width:15px;height:15px;background:#7e36f4"></i><i style="position:absolute;left:360px;top:0;width:15px;height:15px;background:#975cf6"></i><i style="position:absolute;left:375px;top:0;width:15px;height:15px;background:#af83f8"></i><i style="position:absolute;left:390px;top:0;width:15px;height:15px;background:#c8a9fa"></i><i style="position:absolute;left:405px;top:0;width:15px;height:15px;background:#281845"></i><i style="position:absolute;left:420px;top:0;width:15px;height:15px;background:#3a2264"></i><i style="position:absolute;left:435px;top:0;width:15px;height:15px;background:#4b2d83"></i><i style="position:absolute;left:450px;top:0;width:15px;height:15px;background:#5d37a2"></i><i style="position:absolute;left:465px;top:0;width:15px;height:15px;background:#6f42c1"></i><i style="position:absolute;left:480px;top:0;width:15px;height:15px;background:#8660cb"></i><i style="position:absolute;left:495px;top:0;width:15px;height:15px;background:#9d7ed5"></i><i style="position:absolute;left:510px;top:0;width:15px;height:15px;background:#b49ddf"></i><i style="position:absolute;left:525px;top:0;width:15px;height:15px;background:#cbbbe9"></i><i style="position:absolute;left:540px;top:0;width:15px;height:15px;background:#4d1230"></i><i style="position:absolute;left:555px;top:0;width:15px;height:15px;background:#6f1b45"></i><i style="position:absolute;left:570px;top:0;width:15px;height:15px;background:#92235a"></i><i style="position:absolute;left:585px;top:0;width:15px;height:15px;background:#b42b6f"></i><i style="position:absolute;left:600px;top:0;width:15px;height:15px;background:#d63384"></i><i style="position:absolute;left:615px;top:0;width:15px;height:15px;background:#dd5498"></i><i style="position:absolute;left:630px;top:0;width:15px;height:15px;background:#e374ab"></i><i style="position:absolute;left:645px;top:0;width:15px;height:15px;background:#ea95bf"></i><i style="position:absolute;left:660px;top:0;width:15px;height:15px;background:#f0b6d3"></i><i style="position:absolute;left:675px;top:0;width:15px;height:15px;background:#4f1319"></i><i style="position:absolute;left:690px;top:0;width:15px;height:15px;background:#721c24"></i><i style="position:absolute;left:705px;top:0;width:15px;height:15px;background:#96242f"></i><i style="position:absolute;left:720px;top:0;width:15px;height:15px;background:#b92d3a"></i><i style="position:absolute;left:735px;top:0;width:15px;height:15px;background:#dc3545"></i><i style="position:absolute;left:750px;top:0;width:15px;height:15px;background:#e25563"></i><i style="position:absolute;left:765px;top:0;width:15px;height:15px;background:#e77681"></i><i style="position:absolute;left:780px;top:0;width:15px;height:15px;background:#ed969e"></i><i style="position:absolute;left:795px;top:0;width:15px;height:15px;background:#f2b6bc"></i><i style="position:absolute;left:810px;top:0;width:15px;height:15px;background:#5b2d07"></i><i style="position:absolute;left:825px;top:0;width:15px;height:15px;background:#84420a"></i><i style="position:absolute;left:840px;top:0;width:15px;height:15px;background:#ac560e"></i><i style="position:absolute;left:855px;top:0;width:15px;height:15px;background:#d56a11"></i><i style="position:absolute;left:870px;top:0;width:15px;height:15px;background:#fd7e14"></i><i style="position:absolute;left:885px;top:0;width:15px;height:15px;background:#fd933a"></i><i style="position:absolute;left:900px;top:0;width:15px;height:15px;background:#fea75f"></i><i style="position:absolute;left:915px;top:0;width:15px;height:15px;background:#febc85"></i><i style="position:absolute;left:930px;top:0;width:15px;height:15px;background:#fed1aa"></i><i style="position:absolute;left:945px;top:0;width:15px;height:15px;background:#5c4503"></i><i style="position:absolute;left:960px;top:0;width:15px;height:15px;background:#856404"></i><i style="position:absolute;left:975px;top:0;width:15px;height:15px;background:#ad8305"></i></div>
<div class="abs" style="left:366px;top:917px;width:1048px;height:7px;background:#454545"></div><div class="abs" style="left:366px;top:917px;width:711px;height:7px;background:#595959"></div>
<div class="abs" style="left:0;top:0;width:1px;height:926px;background:#141414"></div>
</body></html>
